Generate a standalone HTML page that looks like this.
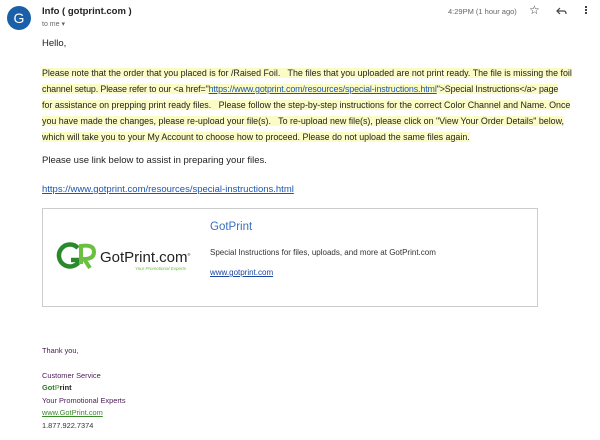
<!DOCTYPE html>
<html><head><style>
body{margin:0;width:600px;height:440px;background:#fff;font-family:"Liberation Sans",sans-serif;position:relative;overflow:hidden;color:#222}
.a{position:absolute;white-space:nowrap}
.hl{background:#fbfbc6}
.p{position:absolute;left:42px;top:65px;font-size:8.9px;line-height:16px;color:#222;white-space:nowrap}
.sig{position:absolute;left:42px;font-size:7.4px;color:#4a1a55;white-space:nowrap}
</style></head><body>
<div class="a" style="left:7px;top:6px;width:24px;height:24px;border-radius:50%;background:#1a5fa8;color:#fff;font-size:14px;line-height:24px;text-align:center">G</div>
<div class="a" style="left:42px;top:6px;font-size:9.5px;font-weight:bold;color:#222">Info ( gotprint.com )</div>
<div class="a" style="left:42px;top:20px;font-size:7px;color:#666">to me ▾</div>
<div class="a" style="left:448px;top:7px;font-size:7.5px;color:#666">4:29PM (1 hour ago)</div>
<div class="a" style="left:529px;top:3px;font-size:12px;color:#333">☆</div>
<svg class="a" style="left:555px;top:6px" width="12" height="10"><path d="M5 2 L2 5 L5 8 M2 5 H9 Q11 5 11 8" fill="none" stroke="#444" stroke-width="1.2"/></svg>
<div class="a" style="left:585px;top:6px;width:2px;height:2px;background:#444;box-shadow:0 3px #444,0 6px #444"></div>
<div class="a" style="left:42px;top:38px;font-size:9.5px">Hello,</div>
<div class="p"><span class="hl">Please note that the order that you placed is for /Raised Foil. &nbsp; The files that you uploaded are not print ready. The file is missing the foil</span><br><span class="hl" style="letter-spacing:-0.12px">channel setup. Please refer to our &lt;a href="<span style="color:#1a55b0;text-decoration:underline">https://www.gotprint.com/resources/special-instructions.html</span>"&gt;Special Instructions&lt;/a&gt; page</span><br><span class="hl">for assistance on prepping print ready files. &nbsp; Please follow the step-by-step instructions for the correct Color Channel and Name. Once</span><br><span class="hl">you have made the changes, please re-upload your file(s). &nbsp; To re-upload new file(s), please click on "View Your Order Details" below,</span><br><span class="hl">which will take you to your My Account to choose how to proceed. Please do not upload the same files again.</span></div>
<div class="a" style="left:42px;top:155px;font-size:9.5px">Please use link below to assist in preparing your files.</div>
<div class="a" style="left:42px;top:184px;font-size:9.5px;color:#1a55b0;text-decoration:underline">https://www.gotprint.com/resources/special-instructions.html</div>
<div class="a" style="left:42px;top:208px;width:494px;height:97px;border:1px solid #ccc"></div>
<svg class="a" style="left:56px;top:240px" width="42" height="32"><path d="M22 8 A11 11 0 1 0 24 20 L15 20" fill="none" stroke="#2a8a2a" stroke-width="4.5"/><path d="M25 24 V6 Q38 4 38 12 Q38 19 28 19 L34 28" fill="none" stroke="#6cc040" stroke-width="4"/></svg>
<div class="a" style="left:100px;top:249px;font-size:15px;color:#222">GotPrint.com<sup style="font-size:4px">®</sup></div>
<div class="a" style="left:135px;top:266px;font-size:4.5px;color:#6cc040;font-style:italic">Your Promotional Experts</div>
<div class="a" style="left:210px;top:221px;font-size:11.5px;color:#3a6fc0">GotPrint</div>
<div class="a" style="left:210px;top:248px;font-size:8px;color:#333">Special Instructions for files, uploads, and more at GotPrint.com</div>
<div class="a" style="left:210px;top:268px;font-size:8px;color:#1a45a0;text-decoration:underline">www.gotprint.com</div>
<div class="sig" style="top:346px">Thank you,</div>
<div class="sig" style="top:371px">Customer Service</div>
<div class="sig" style="top:383px;font-weight:bold;color:#222"><span style="color:#2a7a2a">Got</span><span style="color:#6cc040">P</span>rint</div>
<div class="sig" style="top:396px">Your Promotional Experts</div>
<div class="sig" style="top:408px;color:#3a8a2a;text-decoration:underline">www.GotPrint.com</div>
<div class="sig" style="top:421px;color:#333">1.877.922.7374</div>
</body></html>
